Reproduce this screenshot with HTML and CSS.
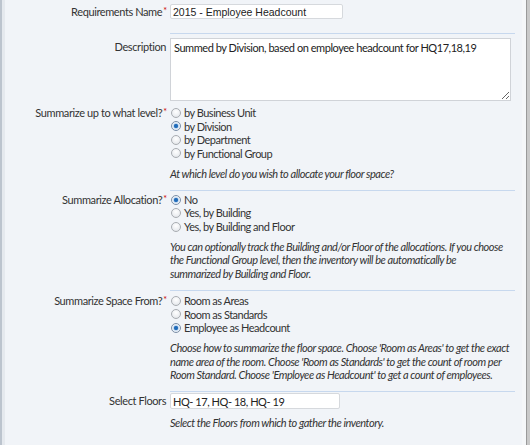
FILE: index.html
```html
<!DOCTYPE html>
<html>
<head>
<meta charset="utf-8">
<link rel="stylesheet" href="styles.css">
</head>
<body>
<div class="frame">
  <div class="edge-left"></div>
  <form class="form">
    <div class="row row-name sep">
      <label class="label">Requirements Name<span class="req">*</span></label>
      <div class="field">
        <input class="text-input name-input" type="text" value="2015 - Employee Headcount">
      </div>
    </div>
    <div class="row row-desc">
      <label class="label desc-label">Description</label>
      <div class="field">
        <textarea class="textarea">Summed by Division, based on employee headcount for HQ17,18,19</textarea>
      </div>
    </div>
    <div class="row row-level sep">
      <label class="label">Summarize up to what level?<span class="req">*</span></label>
      <div class="field">
        <label class="radio"><input type="radio" name="level"><span>by Business Unit</span></label>
        <label class="radio"><input type="radio" name="level" checked><span>by Division</span></label>
        <label class="radio"><input type="radio" name="level"><span>by Department</span></label>
        <label class="radio"><input type="radio" name="level"><span>by Functional Group</span></label>
        <p class="help">At which level do you wish to allocate your floor space?</p>
      </div>
    </div>
    <div class="row row-alloc sep">
      <label class="label">Summarize Allocation?<span class="req">*</span></label>
      <div class="field">
        <label class="radio"><input type="radio" name="alloc" checked><span>No</span></label>
        <label class="radio"><input type="radio" name="alloc"><span>Yes, by Building</span></label>
        <label class="radio"><input type="radio" name="alloc"><span>Yes, by Building and Floor</span></label>
        <p class="help">You can optionally track the Building and/or Floor of the allocations. If you choose the Functional Group level, then the inventory will be automatically be<br>summarized by Building and Floor.</p>
      </div>
    </div>
    <div class="row row-space sep">
      <label class="label">Summarize Space From?<span class="req">*</span></label>
      <div class="field">
        <label class="radio"><input type="radio" name="space"><span>Room as Areas</span></label>
        <label class="radio"><input type="radio" name="space"><span>Room as Standards</span></label>
        <label class="radio"><input type="radio" name="space" checked><span>Employee as Headcount</span></label>
        <p class="help">Choose how to summarize the floor space. Choose 'Room as Areas' to get the exact name area of the room. Choose 'Room as Standards' to get the count of room per Room Standard. Choose 'Employee as Headcount' to get a count of employees.</p>
      </div>
    </div>
    <div class="row row-floors">
      <label class="label floors-label">Select Floors</label>
      <div class="field">
        <input class="text-input floors-input" type="text" value="HQ- 17, HQ- 18, HQ- 19">
        <p class="help">Select the Floors from which to gather the inventory.</p>
      </div>
    </div>
  </form>
  <div class="edge-right"></div>
</div>
</body>
</html>
```

FILE: styles.css
```css
html, body {
  margin: 0;
  padding: 0;
  height: 100%;
  overflow: hidden;
}
body {
  background: #f1f4f8;
  font-family: "Lato", "Open Sans", sans-serif;
  font-size: 11px;
  color: #333;
}
.frame {
  display: flex;
  height: 445px;
}
.edge-left {
  width: 2px;
  flex: none;
  background: #bcc4ce;
  border-right: 3px solid #e5e9ee;
}
.edge-right {
  flex: none;
  width: 4px;
  background: #f5f7f9;
  border-right: 1px solid #9a9a9a;
}
.frame::after {
  content: "";
  flex: none;
  width: 3px;
  background: #c9c9c9;
}
.form {
  flex: 1;
  margin: 0;
  padding-right: 7px;
}
.row {
  display: grid;
  grid-template-columns: 161px 1fr;
  column-gap: 4px;
  padding-top: 3px;
}
.sep::after {
  content: "";
  grid-column: 2;
  height: 1px;
  background: #c7d8ee;
}
.row .field {
  padding-bottom: 10px;
}
.row-name {
  padding-top: 4px;
}
.row-name .field {
  padding-bottom: 14px;
}
.row-desc {
  padding-top: 4px;
}
.row-desc .field {
  padding-bottom: 2px;
}
.row-alloc {
  padding-top: 2px;
}
.row-floors {
  padding-top: 1px;
}
.label {
  text-align: right;
  line-height: 13.5px;
  white-space: nowrap;
  letter-spacing: -0.4px;
}
.row-name .label {
  line-height: 15px;
}
.desc-label {
  padding-top: 2px;
}
.floors-label {
  line-height: 16px;
}
.req {
  color: #cc0000;
  font-size: 9px;
  vertical-align: top;
  position: relative;
  top: -1px;
  margin-left: 1px;
  margin-right: -1px;
  letter-spacing: 0;
}
.field {
  display: flex;
  flex-direction: column;
  align-items: flex-start;
}
.text-input {
  box-sizing: border-box;
  border: 1px solid #d6d9dd;
  background: #fff;
  border-radius: 2px;
  margin: 0;
  outline: none;
  color: #222;
}
.name-input {
  width: 173px;
  height: 15px;
  padding: 0 2px;
  font-family: "Liberation Sans", Arial, sans-serif;
  font-size: 10.5px;
}
.floors-input {
  width: 170px;
  height: 16px;
  padding: 0 2px;
  font-family: "Lato", "Open Sans", sans-serif;
  font-size: 11px;
  letter-spacing: -0.45px;
}
.textarea {
  box-sizing: border-box;
  width: 341px;
  height: 63px;
  border: 1px solid #d0d3d8;
  background: #fff;
  margin: 0;
  padding: 2px 3px;
  font-family: "Lato", "Open Sans", sans-serif;
  font-size: 11px;
  line-height: 13.5px;
  letter-spacing: -0.45px;
  color: #222;
  resize: vertical;
  outline: none;
}
.radio {
  display: flex;
  align-items: center;
  height: 13.5px;
  line-height: 13.5px;
  white-space: nowrap;
  letter-spacing: -0.5px;
}
.radio input {
  -webkit-appearance: none;
  appearance: none;
  box-sizing: border-box;
  width: 10px;
  height: 10px;
  margin: 0 3px 0 1px;
  border-radius: 50%;
  border: 1px solid #a9adb2;
  background: radial-gradient(circle at 50% 35%, #ffffff 0%, #eceef1 60%, #d9dde2 100%);
  flex: none;
}
.radio input:checked {
  border-color: #7c8fa6;
  background: radial-gradient(circle at 50% 50%, #1b63b0 0, #2a74c0 1.8px, #cfe0f2 2.6px, #f4f7fb 4px);
}
.help {
  margin: 6.5px 0 0;
  font-style: italic;
  line-height: 13.4px;
  letter-spacing: -0.45px;
  color: #333;
}
.row-floors .help {
  margin-top: 7px;
}
```
